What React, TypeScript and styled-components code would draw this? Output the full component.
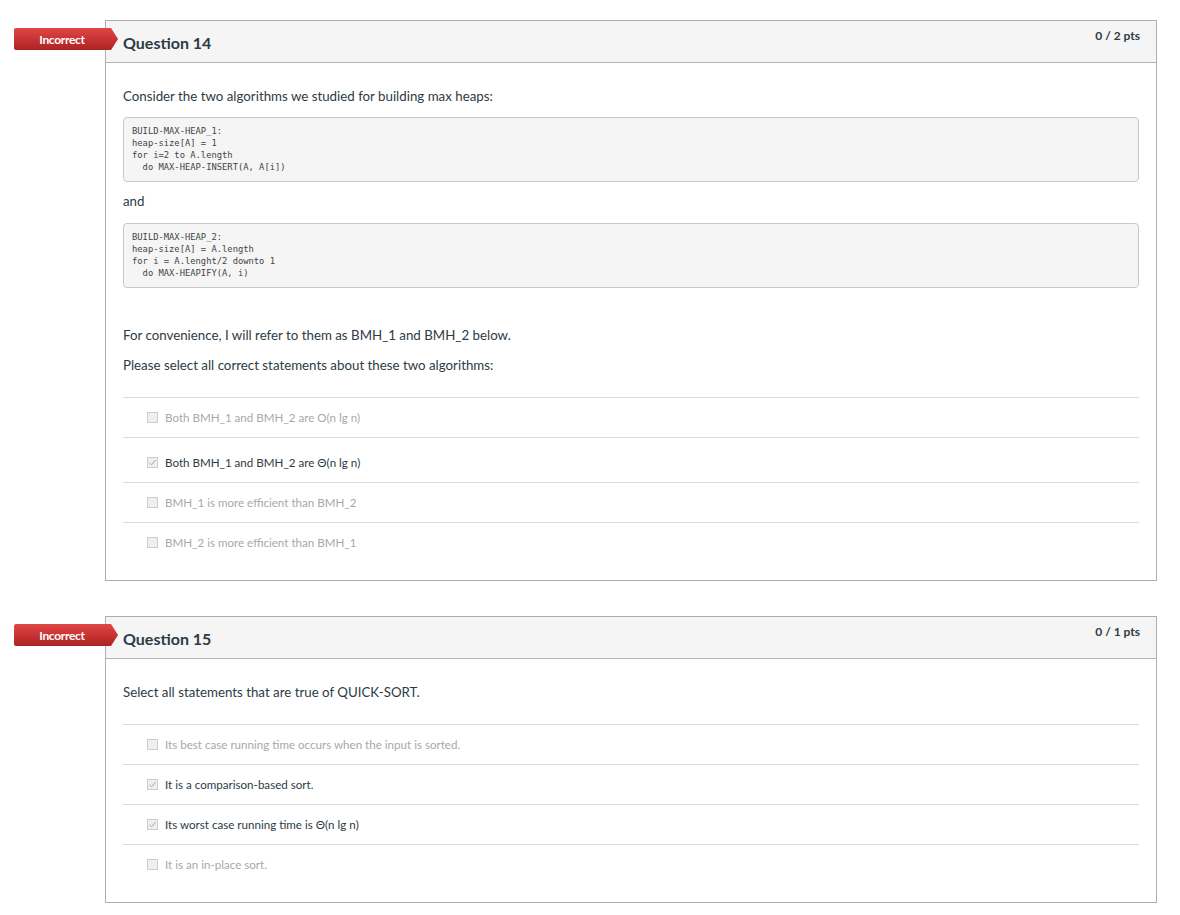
import React from 'react';
import styled, { createGlobalStyle } from 'styled-components';

const GlobalStyle = createGlobalStyle`
  body {
    margin: 0;
    background: #fff;
    font-family: Lato, 'Open Sans', 'Liberation Sans', sans-serif;
    color: #2d3b45;
    -webkit-font-smoothing: antialiased;
  }
`;

const Page = styled.div`
  padding: 20px 0 11px 105px;
  display: flex;
  flex-direction: column;
  gap: 35px;
`;

const Question = styled.section`
  position: relative;
  width: 1052px;
  box-sizing: border-box;
  border: 1px solid #adadad;
`;

const Badge = styled.div`
  position: absolute;
  left: -92px;
  top: 7px;
  width: 104px;
  height: 22px;
  box-sizing: border-box;
  padding-right: 8px;
  display: flex;
  align-items: center;
  justify-content: center;
  clip-path: polygon(0 0, 97px 0, 104px 50%, 97px 100%, 0 100%);
  background: linear-gradient(#e04747, #c52f2f 60%, #a82525);
  border-radius: 2px 0 0 2px;
  color: #fff;
  font-size: 12px;
  font-weight: 700;
  letter-spacing: -0.3px;
`;

const Header = styled.header`
  height: 42px;
  box-sizing: border-box;
  display: flex;
  justify-content: space-between;
  align-items: flex-start;
  padding: 0 16px 0 17px;
  background: #f5f5f5;
  border-bottom: 1px solid #b3b3b3;
`;

const Title = styled.h2`
  margin: 13px 0 0;
  font-size: 16px;
  line-height: 18px;
  font-weight: 700;
  color: #2d3b45;
`;

const Points = styled.div`
  margin-top: 8px;
  font-size: 12px;
  line-height: 14px;
  font-weight: 700;
  color: #2d3b45;
`;

const Body = styled.div`
  padding: 23px 17px 18px;
`;

const Text = styled.p<{ $top?: number }>`
  margin: ${({ $top }) => $top ?? 0}px 0 0;
  font-size: 13.3px;
  line-height: 20px;
`;

const Code = styled.pre<{ $top: number }>`
  margin: ${({ $top }) => $top}px 0 0;
  padding: 7px 8px 8px;
  background: #f5f5f5;
  border: 1px solid #c8c8c8;
  border-radius: 4px;
  font-family: 'DejaVu Sans Mono', 'Liberation Mono', monospace;
  font-size: 8.8px;
  line-height: 12px;
  color: #444;
`;

const Answers = styled.div`
  margin-top: 22px;
`;

const Answer = styled.div<{ $tall?: boolean; $selected?: boolean }>`
  display: flex;
  align-items: center;
  gap: 7px;
  border-top: 1px solid #dcdcdc;
  padding: ${({ $tall }) => ($tall ? '17px 0 12px 24px' : '12px 0 12px 24px')};
  font-size: 11.6px;
  line-height: 15px;
  color: ${({ $selected }) => ($selected ? '#2d3b45' : '#a8a8a8')};
`;

const Box = styled.span`
  width: 11px;
  height: 11px;
  box-sizing: border-box;
  flex: none;
  display: flex;
  align-items: center;
  justify-content: center;
  border: 1px solid #cdcdcd;
  background: #efefef;
`;

const Check = () => (
  <svg width="9" height="9" viewBox="0 0 9 9">
    <path d="M1.5 4.8 L3.5 6.8 L7.6 2" fill="none" stroke="#a8a8a8" strokeWidth="1" />
  </svg>
);

type Option = { text: string; checked?: boolean; tall?: boolean };

const Choices: React.FC<{ options: Option[] }> = ({ options }) => (
  <Answers>
    {options.map((o) => (
      <Answer key={o.text} $tall={o.tall} $selected={o.checked}>
        <Box>{o.checked && <Check />}</Box>
        <span>{o.text}</span>
      </Answer>
    ))}
  </Answers>
);

const QuestionHead: React.FC<{ n: number; pts: string }> = ({ n, pts }) => (
  <>
    <Badge>Incorrect</Badge>
    <Header>
      <Title>Question {n}</Title>
      <Points>{pts}</Points>
    </Header>
  </>
);

const App: React.FC = () => {
  return (
    <>
      <GlobalStyle />
      <Page>
        <Question>
          <QuestionHead n={14} pts="0 / 2 pts" />
          <Body>
            <Text>Consider the two algorithms we studied for building max heaps:</Text>
            <Code $top={11}>{`BUILD-MAX-HEAP_1:
heap-size[A] = 1
for i=2 to A.length
  do MAX-HEAP-INSERT(A, A[i])`}</Code>
            <Text $top={9}>and</Text>
            <Code $top={12}>{`BUILD-MAX-HEAP_2:
heap-size[A] = A.length
for i = A.lenght/2 downto 1
  do MAX-HEAPIFY(A, i)`}</Code>
            <Text $top={37}>For convenience, I will refer to them as BMH_1 and BMH_2 below.</Text>
            <Text $top={10}>Please select all correct statements about these two algorithms:</Text>
            <Choices
              options={[
                { text: 'Both BMH_1 and BMH_2 are O(n lg n)' },
                { text: 'Both BMH_1 and BMH_2 are Θ(n lg n)', checked: true, tall: true },
                { text: 'BMH_1 is more efficient than BMH_2' },
                { text: 'BMH_2 is more efficient than BMH_1' },
              ]}
            />
          </Body>
        </Question>
        <Question>
          <QuestionHead n={15} pts="0 / 1 pts" />
          <Body>
            <Text>Select all statements that are true of QUICK-SORT.</Text>
            <Choices
              options={[
                { text: 'Its best case running time occurs when the input is sorted.' },
                { text: 'It is a comparison-based sort.', checked: true },
                { text: 'Its worst case running time is Θ(n lg n)', checked: true },
                { text: 'It is an in-place sort.' },
              ]}
            />
          </Body>
        </Question>
      </Page>
    </>
  );
};

export default App;
